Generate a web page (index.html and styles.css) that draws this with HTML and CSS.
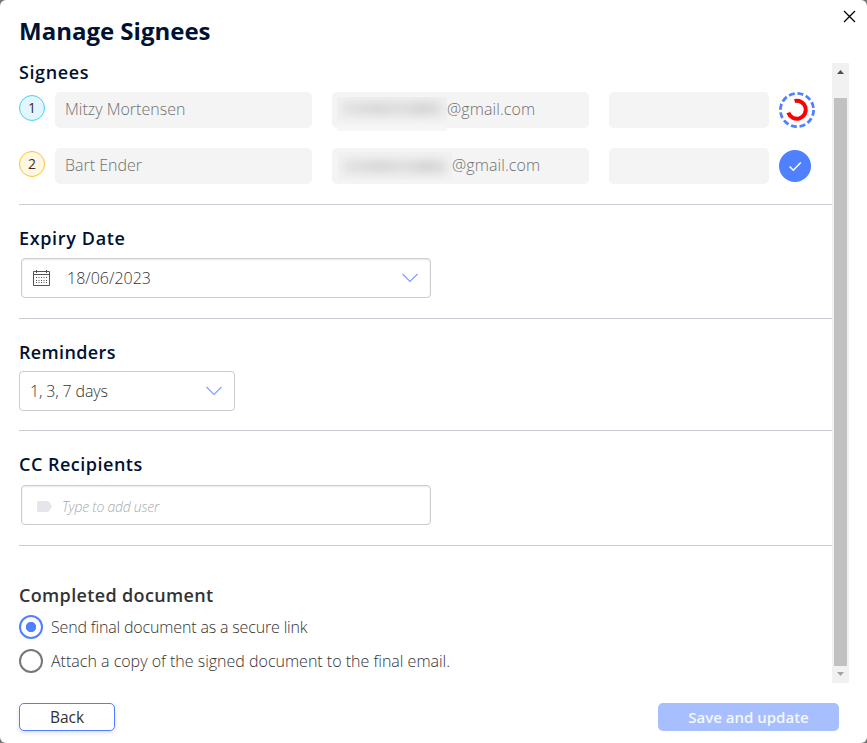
FILE: index.html
```html
<!DOCTYPE html>
<html lang="en">
<head>
    <meta charset="UTF-8">
    <title>Manage Signees</title>
    <link rel="stylesheet" href="styles.css">
</head>
<body>
<div class="modal">
    <button class="close" aria-label="Close">
        <svg width="13" height="13" viewBox="0 0 13 13"><path d="M1 1 L12 12 M12 1 L1 12" stroke="#000" stroke-width="1.3" fill="none"/></svg>
    </button>
    <h1 class="modal-title">Manage Signees</h1>

    <div class="modal-body">
        <div class="content">
            <section class="section signees">
                <h2>Signees</h2>
                <div class="signee">
                    <span class="badge badge-blue">1</span>
                    <div class="field name">Mitzy Mortensen</div>
                    <div class="field email"><span class="hidden-part first"><i></i></span><span class="domain">@gmail.com</span></div>
                    <div class="field phone"></div>
                    <svg class="status" width="36" height="36" viewBox="0 0 36 36" fill="none">
                        <circle cx="18" cy="18" r="16.6" stroke="#4f80ff" stroke-width="2.8" stroke-dasharray="5.9 2.79"/>
                        <path d="M15.6 9 A9 9 0 1 1 9.3 20.6" stroke="#f00" stroke-width="4"/>
                    </svg>
                </div>
                <div class="signee">
                    <span class="badge badge-yellow">2</span>
                    <div class="field name">Bart Ender</div>
                    <div class="field email"><span class="hidden-part second"><i></i></span><span class="domain">@gmail.com</span></div>
                    <div class="field phone"></div>
                    <svg class="status" width="32" height="32" viewBox="0 0 32 32" fill="none">
                        <circle cx="16" cy="16" r="16" fill="#4f80ff"/>
                        <path d="M10.6 16.4 L14.3 20.2 L21.8 12.4" stroke="#fff" stroke-width="1.5"/>
                    </svg>
                </div>
            </section>

            <section class="section expiry">
                <h2>Expiry Date</h2>
                <div class="box wide">
                    <svg width="17" height="16" viewBox="0 0 17 16" fill="none" stroke="#555">
                        <path d="M.5 1.5 H16.5 V15.5 H.5 Z M.5 4.5 H16.5 M3.5 0 V3 M13.5 0 V3"/>
                        <path d="M3 7.5 H15 M3 10.5 H15 M3 12.5 H15" stroke-dasharray="1 1.5"/>
                    </svg>
                    <span class="date">18/06/2023</span>
                    <svg class="chevron" width="16" height="10" viewBox="0 0 16 10"><path d="M.5 1 L8 8.5 L15.5 1" stroke="#7da0ff" stroke-width="1.2" fill="none"/></svg>
                </div>
            </section>

            <section class="section reminders">
                <h2>Reminders</h2>
                <div class="box narrow">
                    <span class="days">1, 3, 7 days</span>
                    <svg class="chevron" width="16" height="10" viewBox="0 0 16 10"><path d="M.5 1 L8 8.5 L15.5 1" stroke="#7da0ff" stroke-width="1.2" fill="none"/></svg>
                </div>
            </section>

            <section class="section recipients">
                <h2>CC Recipients</h2>
                <div class="box wide">
                    <svg class="tag" width="15" height="11" viewBox="0 0 15 11"><path d="M1 0 H10.5 L12.3 1 L15 5.5 L12.3 10 L10.5 11 H1 L0 10 V1 Z" fill="#e5e6eb"/></svg>
                    <span class="placeholder">Type to add user</span>
                </div>
            </section>

            <section class="completed">
                <h2>Completed document</h2>
                <label class="option"><span class="radio checked"></span><span class="secure">Send final document as a secure link</span></label>
                <label class="option"><span class="radio"></span><span>Attach a copy of the signed document to the final email.</span></label>
            </section>
        </div>

        <div class="scrollbar">
            <svg width="7" height="4" viewBox="0 0 7 4"><path d="M3.5 0 L7 4 H0 Z" fill="#505050"/></svg>
            <div class="thumb"></div>
            <svg width="7" height="4" viewBox="0 0 7 4"><path d="M0 0 H7 L3.5 4 Z" fill="#a3a3a3"/></svg>
        </div>
    </div>

    <div class="modal-footer">
        <button class="button back">Back</button>
        <button class="button save">Save and update</button>
    </div>
</div>
</body>
</html>
```

FILE: styles.css
```css
* {
    box-sizing: border-box;
}

body {
    margin: 0;
    background-color: #777;
    font-family: "Open Sans", "Noto Sans", sans-serif;
    font-size: 16px;
    font-weight: 300;
    color: #333;
}

.modal {
    position: relative;
    display: flex;
    flex-direction: column;
    width: 867px;
    height: 743px;
    background-color: #fff;
    border-radius: 6px;
    overflow: hidden;
}

.close {
    position: absolute;
    top: 10px;
    right: 11px;
    display: flex;
    padding: 0;
    border: none;
    background: none;
}

.modal-title {
    height: 63px;
    margin: 0;
    padding: 14px 0 0 19px;
    font-size: 24px;
    line-height: 34px;
    font-weight: 700;
    color: #001233;
}

h2 {
    margin: 0;
    font-size: 18px;
    line-height: 24px;
    font-weight: 600;
    letter-spacing: 0.5px;
    color: #001233;
    white-space: nowrap;
}

.modal-body {
    display: flex;
    height: 620px;
    padding: 0 18px 0 19px;
}

.content {
    width: 813px;
}

.section {
    border-bottom: 1px solid #cccdd4;
}

.signees {
    height: 142px;
}

.signees h2 {
    height: 29px;
    line-height: 18px;
    letter-spacing: 0.6px;
}

.signee {
    display: flex;
    align-items: center;
    height: 36px;
    margin-bottom: 20px;
}

.badge {
    width: 26px;
    height: 26px;
    margin: -4px 10px 0 0;
    border: 1px solid;
    border-radius: 50%;
    text-align: center;
    font-size: 14px;
    line-height: 24px;
    font-weight: 400;
}

.badge-blue {
    border-color: #42d3f5;
    background-color: #e3f6fd;
}

.badge-yellow {
    border-color: #f7c52b;
    background-color: #fff7e2;
}

.field {
    display: flex;
    align-items: center;
    width: 257px;
    height: 36px;
    margin-right: 20px;
    border-radius: 5px;
    background-color: #f4f4f4;
    color: #707070;
    line-height: 22px;
    white-space: nowrap;
}

.name {
    padding: 0 0 2px 10px;
}

.domain {
    padding-bottom: 2px;
    letter-spacing: 0.1px;
}

.phone {
    width: 160px;
    margin-right: 10px;
}

/* masked part of the address */
.hidden-part {
    display: flex;
    align-items: center;
    flex: none;
    overflow: hidden;
    background-color: #f2f2f2;
}

.hidden-part i {
    width: 100%;
    height: 13px;
    margin: 0 5px;
    background: linear-gradient(90deg, #e2e2e2, #d6d6d6 35%, #dedede 60%, #d2d2d2 80%, #dedede);
    filter: blur(5px);
}

.first {
    width: 110px;
    height: 34px;
    margin: 8px 0 0 5px;
    padding-bottom: 12px;
    background: linear-gradient(#f1f1f1 60%, #f8f8f8);
}

.second {
    width: 114px;
    height: 28px;
    margin-left: 6px;
}

.box {
    display: flex;
    align-items: center;
    height: 40px;
    border: 1px solid #ccc;
    border-radius: 4px;
    white-space: nowrap;
}

.wide {
    width: 410px;
    margin-left: 2px;
    padding: 0 12px 0 11px;
    box-shadow: inset 0 1px 2px #e8e8e8;
}

.narrow {
    width: 216px;
    padding: 0 12px 0 10px;
}

.chevron {
    margin-left: auto;
}

.date {
    margin-left: 17px;
    padding-bottom: 1px;
}

.days {
    letter-spacing: -0.15px;
}

.expiry {
    height: 114px;
    padding-top: 21px;
}

.expiry h2 {
    height: 32px;
    letter-spacing: 0.65px;
}

.reminders {
    height: 112px;
    padding-top: 21px;
}

.reminders h2 {
    height: 31px;
    letter-spacing: 0.35px;
}

.recipients {
    height: 115px;
    padding-top: 21px;
}

.recipients h2 {
    height: 33px;
}

.tag {
    margin: 3px 10px 0 4px;
}

.placeholder {
    padding-top: 3px;
    font-size: 14px;
    font-style: italic;
    letter-spacing: -0.25px;
    color: #aaa;
}

.completed {
    padding-top: 37px;
}

.completed h2 {
    height: 32px;
    letter-spacing: 0.35px;
    color: #333;
}

.option {
    display: flex;
    align-items: center;
    gap: 8px;
    height: 24px;
    margin-bottom: 10px;
    white-space: nowrap;
}

.secure {
    letter-spacing: -0.16px;
}

.radio {
    flex: none;
    width: 24px;
    height: 24px;
    border: 2px solid #777;
    border-radius: 50%;
}

.radio.checked {
    border-color: #4f80ff;
    background: radial-gradient(circle, #4f80ff 4.8px, #fff 5.5px);
}

.scrollbar {
    display: flex;
    flex-direction: column;
    align-items: center;
    justify-content: space-between;
    width: 17px;
    padding: 7px 0 7px;
    background-color: #f1f1f1;
}

.thumb {
    width: 13px;
    height: 568px;
    margin-top: 17px;
    background-color: #c1c1c1;
}

.modal-footer {
    display: flex;
    justify-content: space-between;
    padding: 20px 28px 12px 19px;
}

.button {
    height: 28px;
    padding: 0;
    border-radius: 5px;
    font-family: inherit;
    font-size: 15px;
    line-height: 26px;
}

.back {
    width: 96px;
    border: 1px solid #4f80ff;
    background-color: #fff;
    color: #333;
    font-size: 15.5px;
    box-shadow: 0 2px 4px rgba(0, 0, 0, 0.12);
}

.save {
    width: 181px;
    border: none;
    background-color: #a7bfff;
    color: #f4f7ff;
    font-weight: 600;
}
```
